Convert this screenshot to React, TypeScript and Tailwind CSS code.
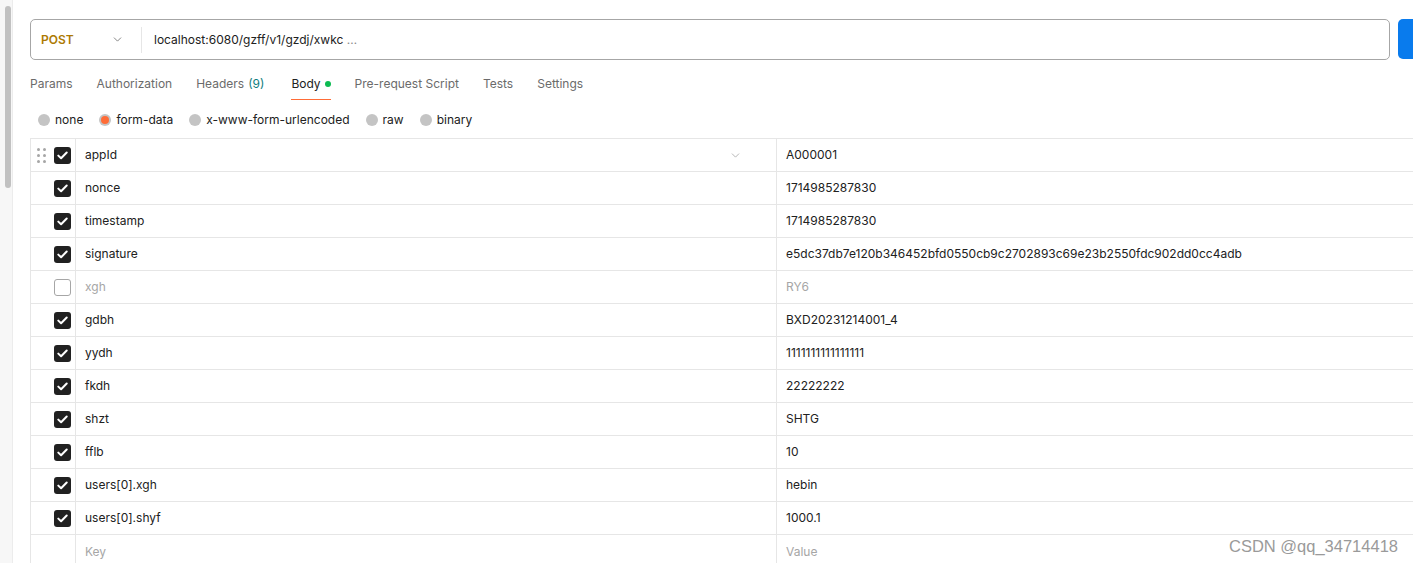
import { ChevronDown } from 'lucide-react';

type Row = { key: string; value: string; on: boolean };

const rows: Row[] = [
  { key: 'appId', value: 'A000001', on: true },
  { key: 'nonce', value: '1714985287830', on: true },
  { key: 'timestamp', value: '1714985287830', on: true },
  { key: 'signature', value: 'e5dc37db7e120b346452bfd0550cb9c2702893c69e23b2550fdc902dd0cc4adb', on: true },
  { key: 'xgh', value: 'RY6', on: false },
  { key: 'gdbh', value: 'BXD20231214001_4', on: true },
  { key: 'yydh', value: '1111111111111111', on: true },
  { key: 'fkdh', value: '22222222', on: true },
  { key: 'shzt', value: 'SHTG', on: true },
  { key: 'fflb', value: '10', on: true },
  { key: 'users[0].xgh', value: 'hebin', on: true },
  { key: 'users[0].shyf', value: '1000.1', on: true },
];

const tabs = ['Params', 'Authorization', 'Headers', 'Body', 'Pre-request Script', 'Tests', 'Settings'];
const bodyTypes = ['none', 'form-data', 'x-www-form-urlencoded', 'raw', 'binary'];

function Checkbox({ on }: { on: boolean }) {
  if (!on) {
    return <div className="w-[17px] h-[17px] rounded-[3px] border border-[#a6a6a6] bg-white" />;
  }
  return (
    <div className="w-[17px] h-[17px] rounded-[3px] bg-[#212121] flex items-center justify-center">
      <svg width="11" height="9" viewBox="0 0 11 9" fill="none">
        <path d="M1.3 4.6 4.1 7.3 9.7 1.5" stroke="white" strokeWidth="2" strokeLinecap="round" strokeLinejoin="round" />
      </svg>
    </div>
  );
}

function DragHandle() {
  return (
    <div className="grid grid-cols-2 gap-x-[3px] gap-y-[3px]">
      {[0, 1, 2, 3, 4, 5].map((i) => (
        <span key={i} className="w-[3px] h-[3px] rounded-full bg-[#a6a6a6]" />
      ))}
    </div>
  );
}

export default function App() {
  return (
    <div className="relative w-[1413px] h-[563px] overflow-hidden bg-white flex font-['Inter',sans-serif] text-[12px] text-[#212121]">
      {/* left scroll strip */}
      <div className="w-[13px] shrink-0 bg-[#f7f7f7] border-r border-[#ececec] pt-[6px] pl-[5px]">
        <div className="w-[6px] h-[182px] rounded-full bg-[#c1c1c1]" />
      </div>

      <div className="flex-1 pl-[17px] pt-[19px] min-w-0">
        {/* url bar */}
        <div className="flex gap-[8px]">
          <div className="w-[1360px] h-[41px] shrink-0 border border-[#a6a6a6] rounded-[5px] flex items-center">
            <div className="w-[110px] h-full flex items-center justify-between pl-[10px] pr-[17px]">
              <span className="font-semibold text-[#ad7a03]">POST</span>
              <ChevronDown size={13} strokeWidth={1.5} className="text-[#6b6b6b]" />
            </div>
            <div className="w-px h-[26px] bg-[#e6e6e6]" />
            <div className="pl-[12px] text-[#212121]">
              localhost:6080/gzff/v1/gzdj/xwkc <span className="text-[#8a8a8a]">…</span>
            </div>
          </div>
          <div className="w-[40px] h-[40px] shrink-0 rounded-[5px] bg-[#097bed]" />
        </div>

        {/* tabs */}
        <div className="flex gap-[24px] mt-[14px] h-[28px]">
          {tabs.map((t) => (
            <div
              key={t}
              className={
                t === 'Body'
                  ? 'relative flex items-start text-[#212121]'
                  : 'flex items-start text-[#6b6b6b]'
              }
            >
              <span className="leading-[20px]">{t}</span>
              {t === 'Headers' && <span className="leading-[20px] ml-[4px] mr-[3px] text-[#0f7e7e]">(9)</span>}
              {t === 'Body' && (
                <>
                  <span className="ml-[4px] mt-[7px] w-[6px] h-[6px] rounded-full bg-[#0cbb52]" />
                  <span className="absolute left-0 right-0 top-[25px] h-[1px] bg-[#ff6c37]" />
                </>
              )}
            </div>
          ))}
        </div>

        {/* body type radios */}
        <div className="flex items-center gap-[16px] mt-[8px] h-[20px] pl-[8px]">
          {bodyTypes.map((b) => (
            <div key={b} className="flex items-center gap-[5px]">
              {b === 'form-data' ? (
                <span className="w-[12px] h-[12px] rounded-full bg-[#c4c4c4] flex items-center justify-center">
                  <span className="w-[8px] h-[8px] rounded-full bg-[#ff6c37]" />
                </span>
              ) : (
                <span className="w-[12px] h-[12px] rounded-full bg-[#c4c4c4]" />
              )}
              <span className="text-[#212121]">{b}</span>
            </div>
          ))}
        </div>

        {/* key/value table */}
        <div className="mt-[8px] border-t border-l border-[#e6e6e6]">
          {rows.map((r, i) => (
            <div key={r.key} className="flex h-[33px] border-b border-[#e6e6e6]">
              <div className="w-[45px] shrink-0 flex items-center pl-[6px] gap-[8px] border-r border-[#e6e6e6]">
                <div className="w-[9px]">{i === 0 && <DragHandle />}</div>
                <Checkbox on={r.on} />
              </div>
              <div className="w-[701px] shrink-0 flex items-center justify-between pl-[9px] pr-[34px] border-r border-[#e6e6e6]">
                <span className={r.on ? 'text-[#212121]' : 'text-[#a6a6a6]'}>{r.key}</span>
                {i === 0 && <ChevronDown size={13} strokeWidth={1.5} className="text-[#a6a6a6]" />}
              </div>
              <div className="flex-1 flex items-center pl-[9px]">
                <span className={r.on ? 'text-[#212121]' : 'text-[#a6a6a6]'}>{r.value}</span>
              </div>
            </div>
          ))}
          <div className="flex h-[33px]">
            <div className="w-[45px] shrink-0 border-r border-[#e6e6e6]" />
            <div className="w-[701px] shrink-0 flex items-center pl-[9px] border-r border-[#e6e6e6] text-[#a6a6a6]">Key</div>
            <div className="flex-1 flex items-center pl-[9px] text-[#a6a6a6]">Value</div>
          </div>
        </div>
      </div>

      {/* watermark */}
      <div className="absolute right-[15px] top-[534px] text-[16.5px] text-[#9a9a9a] font-['Liberation_Sans',sans-serif]">
        CSDN @qq_34714418
      </div>
    </div>
  );
}
